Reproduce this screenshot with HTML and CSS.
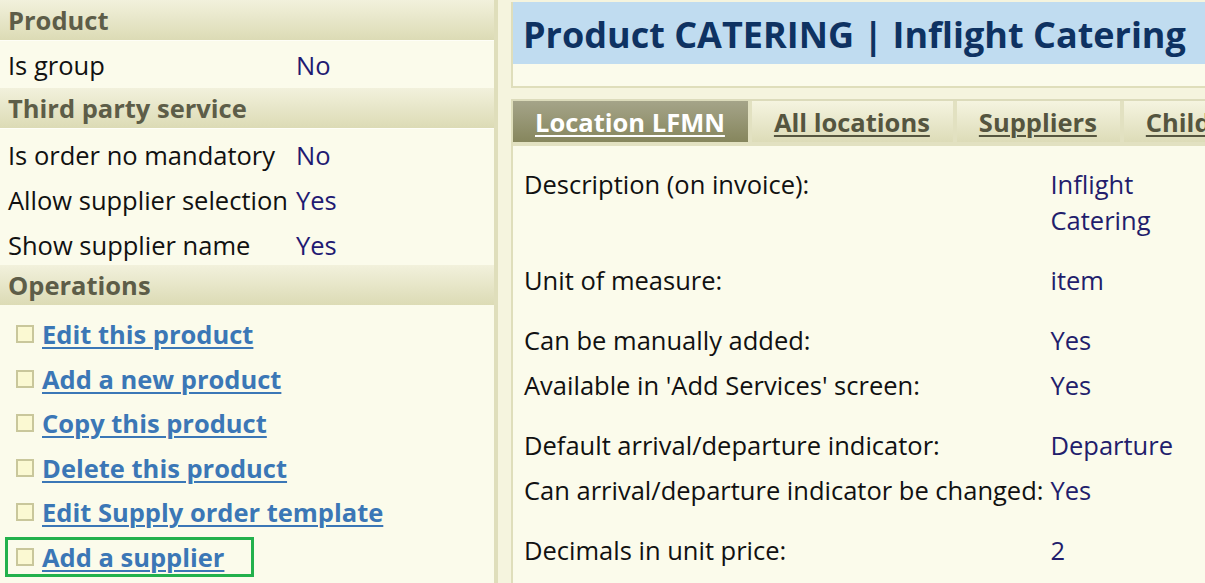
FILE: index.html
```html
<!DOCTYPE html>
<html lang="en">
<head>
<meta charset="utf-8">
<title>Product CATERING</title>
<link rel="stylesheet" href="styles.css">
</head>
<body>
<div class="page">
  <aside class="sidebar">
    <div class="sec-head">Product</div>
    <div class="sec-body first">
      <div class="prop"><span class="prop-label">Is group</span><span class="prop-val">No</span></div>
    </div>
    <div class="sec-head">Third party service</div>
    <div class="sec-body">
      <div class="prop"><span class="prop-label">Is order no mandatory</span><span class="prop-val">No</span></div>
      <div class="prop"><span class="prop-label">Allow supplier selection</span><span class="prop-val">Yes</span></div>
      <div class="prop last"><span class="prop-label">Show supplier name</span><span class="prop-val">Yes</span></div>
    </div>
    <div class="sec-head">Operations</div>
    <ul class="ops">
      <li class="op"><span class="box"></span><a href="#">Edit this product</a></li>
      <li class="op"><span class="box"></span><a href="#">Add a new product</a></li>
      <li class="op"><span class="box"></span><a href="#">Copy this product</a></li>
      <li class="op"><span class="box"></span><a href="#">Delete this product</a></li>
      <li class="op"><span class="box"></span><a href="#">Edit Supply order template</a></li>
      <li class="op hl"><span class="mark"><span class="box"></span><a href="#">Add a supplier</a></span></li>
    </ul>
  </aside>
  <main class="main">
    <div class="title-box">
      <h1 class="title">Product CATERING | Inflight Catering</h1>
      <div class="title-pad"></div>
    </div>
    <div class="tab-box">
      <div class="tabs">
        <a class="tab active" href="#">Location LFMN</a>
        <a class="tab" href="#">All locations</a>
        <a class="tab" href="#">Suppliers</a>
        <a class="tab" href="#">Children</a>
      </div>
      <div class="tab-content">
        <table class="details">
          <tr><td class="lbl">Description (on invoice):</td><td class="val"><div class="val-wrap">Inflight Catering</div></td></tr>
          <tr class="spacer"><td colspan="2"></td></tr>
          <tr><td class="lbl">Unit of measure:</td><td class="val"><div class="val-wrap">item</div></td></tr>
          <tr class="spacer"><td colspan="2"></td></tr>
          <tr><td class="lbl">Can be manually added:</td><td class="val"><div class="val-wrap">Yes</div></td></tr>
          <tr><td class="lbl">Available in 'Add Services' screen:</td><td class="val"><div class="val-wrap">Yes</div></td></tr>
          <tr class="spacer"><td colspan="2"></td></tr>
          <tr><td class="lbl">Default arrival/departure indicator:</td><td class="val"><div class="val-wrap">Departure</div></td></tr>
          <tr><td class="lbl">Can arrival/departure indicator be changed:</td><td class="val"><div class="val-wrap">Yes</div></td></tr>
          <tr class="spacer"><td colspan="2"></td></tr>
          <tr><td class="lbl">Decimals in unit price:</td><td class="val"><div class="val-wrap">2</div></td></tr>
        </table>
      </div>
    </div>
  </main>
</div>
</body>
</html>
```

FILE: styles.css
```css
html, body {
  margin: 0;
  padding: 0;
}
body {
  background: #f5f4de;
  font-family: "Open Sans", "Noto Sans", "DejaVu Sans", sans-serif;
  font-size: 25.5px;
  color: #111;
  overflow: hidden;
  height: 583px;
}
.page {
  display: flex;
  height: 583px;
}
.sidebar {
  flex: none;
  width: 494px;
  background: #fbfbeb;
  border-right: 4px solid #dfdebb;
}
.sec-head {
  height: 40px;
  line-height: 40px;
  padding-left: 8px;
  background: linear-gradient(#f2f1dc, #dcdbb5);
  color: #5d5d48;
  font-weight: bold;
}
.sec-body {
  padding-top: 4px;
  border-top: 1px solid #fefef7;
}
.sec-body.first {
  padding-top: 2px;
}
.prop {
  display: flex;
  height: 45px;
  line-height: 45px;
  padding-left: 8px;
}
.prop.last {
  height: 42px;
}
.prop-label {
  width: 288px;
  flex: none;
}
.prop-val {
  color: #1f1a72;
}
.ops {
  list-style: none;
  margin: 0;
  padding: 7px 0 0;
}
.op {
  display: flex;
  align-items: center;
  height: 44.5px;
  padding-left: 16px;
}
.op a, .mark a {
  color: #3b77b6;
  font-weight: bold;
  text-decoration: underline;
  text-decoration-thickness: 2px;
  text-underline-offset: 3px;
}
.box {
  flex: none;
  width: 18px;
  height: 18px;
  box-sizing: border-box;
  border: 2px solid #c9c79b;
  background: #fbf9d2;
  margin-right: 8px;
}
.op.hl {
  padding-left: 5px;
}
.mark {
  display: flex;
  align-items: center;
  box-sizing: border-box;
  height: 40px;
  width: 249px;
  border: 3px solid #22b14c;
  padding-left: 8px;
}
.main {
  flex: 1;
  min-width: 0;
  margin-left: 13px;
  overflow: hidden;
}
.title-box {
  margin-top: 2px;
  border-left: 2px solid #dfdebb;
  border-bottom: 2px solid #dfdebb;
  background: #fbfbeb;
}
.title {
  margin: 0;
  height: 62px;
  line-height: 66px;
  padding-left: 10px;
  background: #c0dcf0;
  color: #0e3262;
  font-size: 36px;
  font-weight: bold;
  white-space: nowrap;
}
.title-pad {
  height: 22px;
}
.tab-box {
  margin-top: 11px;
  border-top: 2px solid #dcdbbb;
  border-left: 2px solid #dfdebb;
}
.tabs {
  display: flex;
  gap: 4px;
  background: #e2e1c1;
  padding-bottom: 4px;
  white-space: nowrap;
}
.tab {
  flex: none;
  height: 41px;
  line-height: 43px;
  padding: 0 23px 0 22px;
  background: linear-gradient(#f5f4e0, #dddcb8);
  color: #55553f;
  font-weight: bold;
  text-decoration: underline;
  text-decoration-thickness: 2px;
  text-underline-offset: 3px;
}
.tab.active {
  background: linear-gradient(#a5a489, #86865d);
  color: #fff;
}
.tab-content {
  background: #fbfbeb;
  padding: 15px 0 0 11px;
  height: 460px;
}
.details {
  border-collapse: collapse;
}
.details td {
  padding: 4.5px 0;
  line-height: 36px;
  vertical-align: top;
}
.details .lbl {
  white-space: nowrap;
  padding-right: 7px;
  color: #111;
}
.details .val {
  color: #221d6c;
}
.val-wrap {
  width: 140px;
}
.details .spacer td {
  height: 15px;
  padding: 0;
  line-height: 0;
}
```
